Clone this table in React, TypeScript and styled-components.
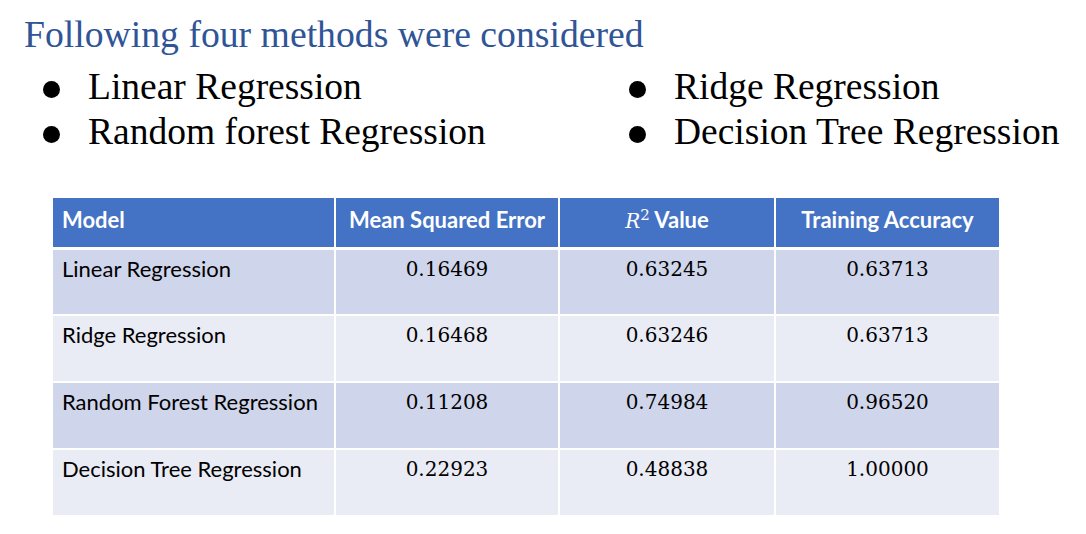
import React from "react"
import styled, { createGlobalStyle } from "styled-components"

const GlobalStyle = createGlobalStyle`
    html, body {
        margin: 0;
        padding: 0;
        background: #ffffff;
    }
    body {
        width: 1086px;
        height: 534px;
        overflow: hidden;
    }
`

const rows = [
    { model: "Linear Regression", mse: "0.16469", r2: "0.63245", acc: "0.63713" },
    { model: "Ridge Regression", mse: "0.16468", r2: "0.63246", acc: "0.63713" },
    { model: "Random Forest Regression", mse: "0.11208", r2: "0.74984", acc: "0.96520" },
    { model: "Decision Tree Regression", mse: "0.22923", r2: "0.48838", acc: "1.00000" },
]

const App = () => {
    return (
        <Slide>
            <GlobalStyle />
            <Title>Following four methods were considered</Title>
            <Bullets>
                <Bullet>Linear Regression</Bullet>
                <Bullet>Ridge Regression</Bullet>
                <Bullet>Random forest Regression</Bullet>
                <Bullet>Decision Tree Regression</Bullet>
            </Bullets>
            <Table>
                <thead>
                    <tr>
                        <HeadCell>Model</HeadCell>
                        <HeadCell $center>Mean Squared Error</HeadCell>
                        <HeadCell $center>
                            <MathR>R</MathR><Sup>2</Sup> Value
                        </HeadCell>
                        <HeadCell $center>Training Accuracy</HeadCell>
                    </tr>
                </thead>
                <tbody>
                    {rows.map((row, index) =>
                        <Row key={row.model} $odd={index % 2 === 0}>
                            <NameCell>{row.model}</NameCell>
                            <NumCell>{row.mse}</NumCell>
                            <NumCell>{row.r2}</NumCell>
                            <NumCell>{row.acc}</NumCell>
                        </Row>
                    )}
                </tbody>
            </Table>
        </Slide>
    )
}

export default App

const Slide = styled.div`
    width: 1086px;
    height: 534px;
    padding: 12px 0 0 24px;
    box-sizing: border-box;
`

const Title = styled.h1`
    margin: 0;
    font-family: "Liberation Serif", "Times New Roman", serif;
    font-weight: 400;
    font-size: 37.7px;
    line-height: 44px;
    color: #2f5597;
`

const Bullets = styled.ul`
    display: grid;
    grid-template-columns: 586px 1fr;
    margin: 8px 0 0;
    padding: 0 0 0 18px;
    list-style: none;
`

const Bullet = styled.li`
    position: relative;
    padding-left: 46px;
    font-family: "Liberation Serif", "Times New Roman", serif;
    font-size: 37.5px;
    line-height: 45px;
    color: #000;

    &::before {
        content: "";
        position: absolute;
        left: 1px;
        top: 17px;
        width: 17px;
        height: 17px;
        border-radius: 50%;
        background: #000;
    }
`

const Table = styled.table`
    margin: 44px 0 0 29px;
    width: 946px;
    border-collapse: collapse;
    table-layout: fixed;
    font-family: Lato, "Open Sans", sans-serif;

    th:nth-child(1), td:nth-child(1) { width: 282px; }
    th:nth-child(2), td:nth-child(2) { width: 224px; }
    th:nth-child(3), td:nth-child(3) { width: 216px; }
`

const HeadCell = styled.th<{ $center?: boolean }>`
    height: 50px;
    padding: 0 9px 6px;
    box-sizing: border-box;
    background: #4472c4;
    color: #fff;
    font-size: 22px;
    font-weight: 700;
    text-align: ${p => p.$center ? "center" : "left"};
    border-left: 2px solid #fff;
    border-bottom: 3px solid #fff;
    vertical-align: middle;

    &:first-child { border-left: none; }
`

const MathR = styled.span`
    font-family: "DejaVu Serif", serif;
    font-style: italic;
    font-weight: 400;
    font-size: 20px;
`

const Sup = styled.sup`
    font-family: "DejaVu Serif", serif;
    font-weight: 400;
    font-size: 15px;
    vertical-align: 8px;
    line-height: 0;
`

const Row = styled.tr<{ $odd: boolean }>`
    background: ${p => p.$odd ? "#cfd5ea" : "#e9ebf5"};
    height: 67px;

    td {
        border-left: 2px solid #fff;
        border-bottom: 2px solid #fff;
        vertical-align: top;
    }
    td:first-child { border-left: none; }
`

const NameCell = styled.td`
    padding: 6px 9px 0;
    font-size: 22px;
    line-height: 26px;
    color: #000;
`

const NumCell = styled.td`
    padding: 6px 0 0;
    text-align: center;
    font-family: "DejaVu Serif", serif;
    font-size: 20px;
    line-height: 26px;
    color: #000;
`
